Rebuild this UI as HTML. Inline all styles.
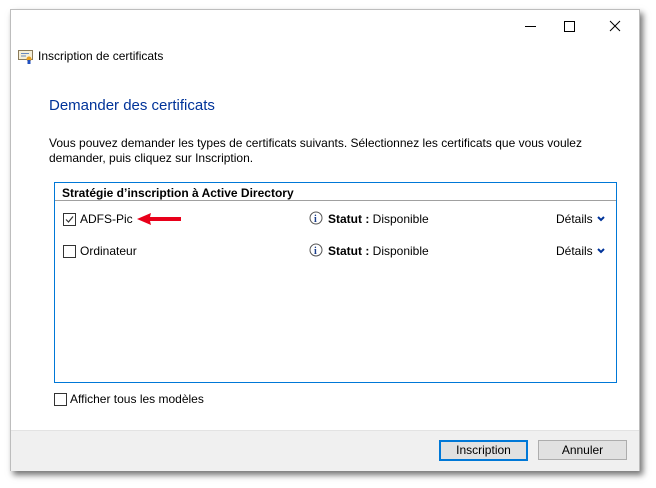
<!DOCTYPE html>
<html><head><style>
body{margin:0;width:656px;height:488px;background:#fff;position:relative;overflow:hidden;font-family:"Liberation Sans",sans-serif;font-size:12px;color:#000}
.win{position:absolute;left:10px;top:9px;width:628px;height:460px;background:#fff;border:1px solid #bdbdbd;box-shadow:3px 4px 6px rgba(0,0,0,.55)}
.t{position:absolute;white-space:nowrap}
.footer{position:absolute;left:0;top:420px;width:628px;height:40px;background:#f0f0f0;border-top:1px solid #e3e3e3}
.btn{position:absolute;top:9px;height:18px;width:87px;background:#e1e1e1;border:1px solid #adadad;text-align:center;line-height:18px}
.cb{position:absolute;width:11px;height:11px;border:1px solid #333;background:#fff}
.box{position:absolute;left:43px;top:172px;width:561px;height:199px;border:1px solid #0078d7}
</style></head><body>
<div class="win">
 <svg style="position:absolute;left:7px;top:40px" width="16" height="14"><rect x="0.5" y="0.5" width="14" height="9" fill="#f6efd8" stroke="#8a7a5a"/><line x1="3" y1="3.5" x2="11" y2="3.5" stroke="#6a8ac0"/><line x1="3" y1="6" x2="8" y2="6" stroke="#6a8ac0"/><circle cx="11" cy="9" r="2.5" fill="#e8a020"/><rect x="9.5" y="10" width="3" height="4" fill="#2050c0"/></svg>
 <div class="t" style="left:27px;top:39px;font-size:12px">Inscription de certificats</div>
 <div style="position:absolute;left:514px;top:16px;width:11px;height:1px;background:#000"></div>
 <div style="position:absolute;left:553px;top:11px;width:9px;height:9px;border:1px solid #000"></div>
 <svg style="position:absolute;left:598px;top:10px" width="12" height="12"><path d="M1 1L11 11M11 1L1 11" stroke="#000" stroke-width="1"/></svg>
 <div class="t" style="left:38px;top:87px;font-size:15px;color:#003399">Demander des certificats</div>
 <div class="t" style="left:38px;top:126px;line-height:15px">Vous pouvez demander les types de certificats suivants. Sélectionnez les certificats que vous voulez<br>demander, puis cliquez sur Inscription.</div>
 <div class="box">
  <div style="position:absolute;left:0;top:0;width:561px;height:17px;border-bottom:1px solid #a0a0a0"></div>
  <div class="t" style="left:7px;top:3px;font-weight:bold">Stratégie d’inscription à Active Directory</div>
  <div class="cb" style="left:8px;top:30px"></div>
  <svg style="position:absolute;left:9px;top:31px" width="11" height="11"><path d="M2 5.5L4.5 8L9 2.5" stroke="#333" fill="none" stroke-width="1.2"/></svg>
  <div class="t" style="left:25px;top:29px">ADFS-Pic</div>
  <svg style="position:absolute;left:80px;top:28px" width="48" height="16"><path d="M2 8L16 2L15 6L46 6L46 10L15 10L16 14Z" fill="#e8001a"/></svg>
  <div class="cb" style="left:8px;top:62px"></div>
  <div class="t" style="left:25px;top:61px">Ordinateur</div>
  <svg style="position:absolute;left:253px;top:28px" width="16" height="16"><circle cx="8" cy="7" r="6" fill="#fff" stroke="#555"/><text x="6" y="11" font-size="10" font-weight="bold" fill="#1a3d8a" font-family="Liberation Serif">i</text></svg>
  <div class="t" style="left:273px;top:29px"><b>Statut :</b> Disponible</div>
  <svg style="position:absolute;left:253px;top:60px" width="16" height="16"><circle cx="8" cy="7" r="6" fill="#fff" stroke="#555"/><text x="6" y="11" font-size="10" font-weight="bold" fill="#1a3d8a" font-family="Liberation Serif">i</text></svg>
  <div class="t" style="left:273px;top:61px"><b>Statut :</b> Disponible</div>
  <div class="t" style="left:501px;top:29px">Détails</div>
  <svg style="position:absolute;left:542px;top:33px" width="8" height="6"><path d="M1 1L4 4L7 1" stroke="#003399" stroke-width="2" fill="none"/></svg>
  <div class="t" style="left:501px;top:61px">Détails</div>
  <svg style="position:absolute;left:542px;top:65px" width="8" height="6"><path d="M1 1L4 4L7 1" stroke="#003399" stroke-width="2" fill="none"/></svg>
 </div>
 <div class="cb" style="left:43px;top:383px"></div>
 <div class="t" style="left:59px;top:382px">Afficher tous les modèles</div>
 <div class="footer">
  <div class="btn" style="left:428px;border:2px solid #0078d7;height:17px;width:85px;line-height:17px">Inscription</div>
  <div class="btn" style="left:527px">Annuler</div>
 </div>
</div>
</body></html>
